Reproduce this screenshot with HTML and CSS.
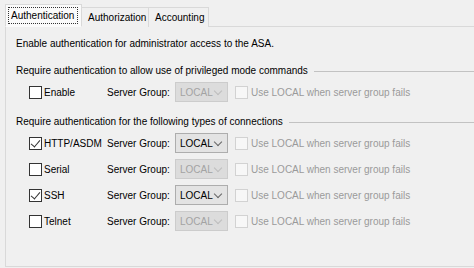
FILE: index.html
```html
<!DOCTYPE html>
<html>
<head>
<meta charset="utf-8">
<link rel="stylesheet" href="styles.css">
</head>
<body>
<div class="tabs">
  <div class="tab active"><span class="focus">Authentication</span></div>
  <div class="tab first">Authorization</div>
  <div class="tab">Accounting</div>
</div>
<div class="panel">
  <p class="intro">Enable authentication for administrator access to the ASA.</p>
  <div class="group">
    <div class="heading"><span>Require authentication to allow use of privileged mode commands</span></div>
    <div class="row">
      <label class="chk"><span class="box"></span>Enable</label>
      <span class="sg">Server Group:</span>
      <span class="sel disabled">LOCAL<span class="chev"></span></span>
      <span class="box dis"></span>
      <span class="uselocal">Use LOCAL when server group fails</span>
    </div>
  </div>
  <div class="group second">
    <div class="heading"><span>Require authentication for the following types of connections</span></div>
    <div class="row">
      <label class="chk"><span class="box checked"></span>HTTP/ASDM</label>
      <span class="sg">Server Group:</span>
      <span class="sel">LOCAL<span class="chev"></span></span>
      <span class="box dis"></span>
      <span class="uselocal">Use LOCAL when server group fails</span>
    </div>
    <div class="row">
      <label class="chk"><span class="box"></span>Serial</label>
      <span class="sg">Server Group:</span>
      <span class="sel disabled">LOCAL<span class="chev"></span></span>
      <span class="box dis"></span>
      <span class="uselocal">Use LOCAL when server group fails</span>
    </div>
    <div class="row">
      <label class="chk"><span class="box checked"></span>SSH</label>
      <span class="sg">Server Group:</span>
      <span class="sel">LOCAL<span class="chev"></span></span>
      <span class="box dis"></span>
      <span class="uselocal">Use LOCAL when server group fails</span>
    </div>
    <div class="row">
      <label class="chk"><span class="box"></span>Telnet</label>
      <span class="sg">Server Group:</span>
      <span class="sel disabled">LOCAL<span class="chev"></span></span>
      <span class="box dis"></span>
      <span class="uselocal">Use LOCAL when server group fails</span>
    </div>
  </div>
</div>
</body>
</html>
```
FILE: styles.css
```css
html, body {
  margin: 0;
  padding: 0;
  background: #f0f0f0;
  font-family: "Liberation Sans", Arial, sans-serif;
  font-size: 10px;
  color: #000;
  overflow: hidden;
  white-space: nowrap;
}
.tabs {
  display: flex;
  align-items: flex-end;
  height: 27px;
  padding-left: 5px;
  position: relative;
  z-index: 1;
  margin-bottom: -1px;
}
.tab {
  height: 20px;
  line-height: 19px;
  padding: 0 4px 0 6px;
  border: 1px solid #d9d9d9;
  border-bottom: none;
  border-left: none;
  background: #f0f0f0;
  box-sizing: border-box;
}
.tab.active {
  width: 77px;
  height: 23px;
  line-height: 21px;
  border-left: 1px solid #d9d9d9;
  border-bottom: 1px solid #fafafa;
  background: #fafafa;
  padding: 0 0 0 3px;
}
.tab.first {
  width: 67px;
}
.focus {
  display: inline-block;
  line-height: 15px;
  padding: 0 3px 0 2px;
  outline: 1px dotted #333;
}
.panel {
  margin-left: 5px;
  height: 241px;
  border: 1px solid #d9d9d9;
  border-right: none;
  box-sizing: border-box;
  padding-left: 10px;
}
.intro {
  margin: 0;
  height: 34px;
  line-height: 34px;
}
.heading {
  display: flex;
  align-items: center;
  height: 18px;
}
.heading::after {
  content: "";
  flex: 1;
  border-top: 1px solid #c2c2c2;
  margin-left: 6px;
  margin-top: 2px;
}
.second {
  margin-top: 7px;
}
.row {
  display: flex;
  align-items: center;
  height: 26px;
  padding-left: 13px;
}
.chk {
  display: flex;
  align-items: center;
  width: 78px;
  flex: none;
}
.box {
  display: inline-block;
  width: 13px;
  height: 13px;
  box-sizing: border-box;
  border: 1px solid #333;
  background: #fff;
  margin-right: 2px;
  position: relative;
  flex: none;
}
.box.checked::after {
  content: "";
  position: absolute;
  left: 3px;
  top: 0px;
  width: 4px;
  height: 8px;
  border-right: 1.3px solid #333;
  border-bottom: 1.3px solid #333;
  transform: rotate(40deg);
}
.box.dis {
  border-color: #d2d2d2;
  background: #f7f7f7;
  margin-left: 7px;
  margin-right: 3px;
}
.sg {
  width: 68px;
  flex: none;
}
.sel {
  display: flex;
  align-items: center;
  width: 53px;
  height: 20px;
  box-sizing: border-box;
  border: 1px solid #adadad;
  background: #e3e3e3;
  padding-left: 4px;
  position: relative;
  flex: none;
}
.sel.disabled {
  border-color: #cccccc;
  background: #dcdcdc;
  color: #a3a3a3;
}
.chev {
  position: absolute;
  right: 6px;
  top: 5px;
  width: 5px;
  height: 5px;
  border-right: 1px solid #666;
  border-bottom: 1px solid #666;
  transform: rotate(45deg);
}
.sel.disabled .chev {
  border-color: #bdbdbd;
}
.uselocal {
  color: #9a9a9a;
}
```
